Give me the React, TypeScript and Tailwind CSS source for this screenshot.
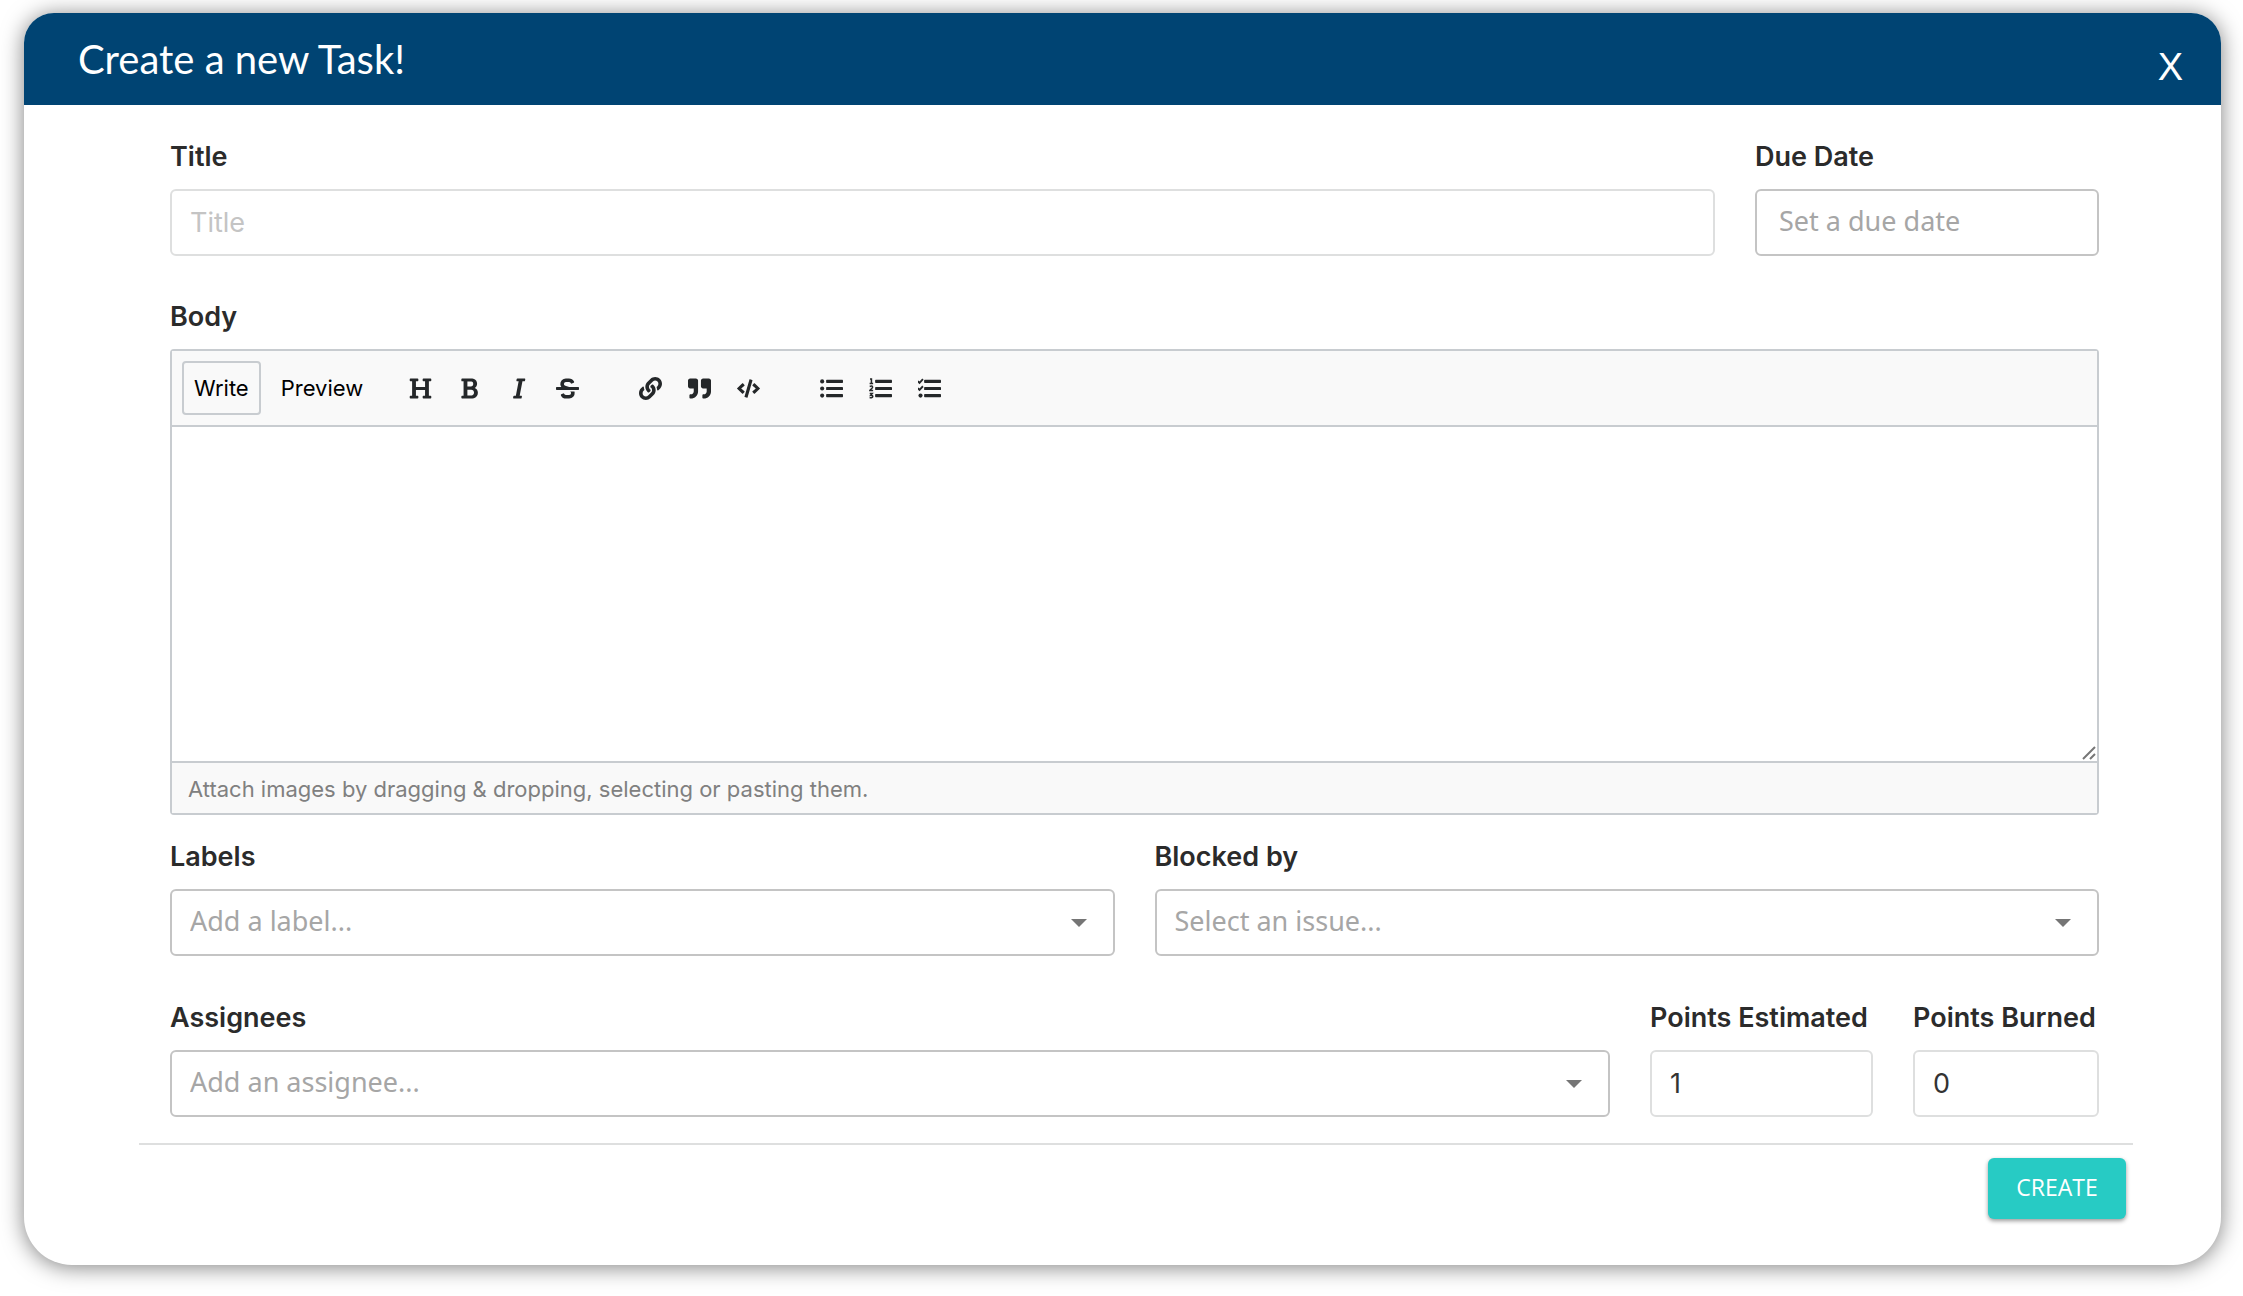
import { ReactNode, useState } from "react";
import { FaCode, FaLink, FaQuoteRight, FaStrikethrough } from "react-icons/fa";

const HeadingIcon = () => (
  <svg viewBox="0 0 512 512" className="h-[23px]" fill="currentColor">
    <path d="M496 80V48c0-8.837-7.163-16-16-16H320c-8.837 0-16 7.163-16 16v32c0 8.837 7.163 16 16 16h37.621v128H154.379V96H192c8.837 0 16-7.163 16-16V48c0-8.837-7.163-16-16-16H32c-8.837 0-16 7.163-16 16v32c0 8.837 7.163 16 16 16h37.275v320H32c-8.837 0-16 7.163-16 16v32c0 8.837 7.163 16 16 16h160c8.837 0 16-7.163 16-16v-32c0-8.837-7.163-16-16-16h-37.621V288H357.62v128H320c-8.837 0-16 7.163-16 16v32c0 8.837 7.163 16 16 16h160c8.837 0 16-7.163 16-16v-32c0-8.837-7.163-16-16-16h-37.275V96H480c8.837 0 16-7.163 16-16z" />
  </svg>
);

const BoldIcon = () => (
  <svg viewBox="0 0 384 512" className="h-[23px]" fill="currentColor">
    <path d="M304.793 243.891c33.639-18.537 53.657-54.16 53.657-95.693 0-48.236-26.25-87.626-68.626-104.179C265.138 34.01 240.849 32 209.661 32H24c-8.837 0-16 7.163-16 16v33.049c0 8.837 7.163 16 16 16h33.113v318.53H24c-8.837 0-16 7.163-16 16V464c0 8.837 7.163 16 16 16h195.69c24.203 0 44.834-1.289 66.866-7.584C337.52 457.193 376 410.647 376 350.014c0-52.168-26.573-91.684-71.207-106.123zM142.217 100.809h67.444c16.294 0 27.536 2.019 37.525 6.717 15.828 8.479 24.906 26.502 24.906 49.446 0 35.029-20.32 56.79-53.029 56.79h-76.846V100.809zm112.642 305.475c-10.14 4.056-22.677 4.907-31.409 4.907h-81.233V281.943h84.367c39.645 0 63.057 25.38 63.057 63.057.001 28.425-13.66 52.483-34.782 61.284z" />
  </svg>
);

const ItalicIcon = () => (
  <svg viewBox="0 0 320 512" className="h-[23px]" fill="currentColor">
    <path d="M204.758 416h-33.849l62.092-320h40.725a16 16 0 0 0 15.704-12.937l6.242-32C297.599 41.184 290.034 32 279.968 32H120.235a16 16 0 0 0-15.704 12.937l-6.242 32C96.362 86.816 103.927 96 113.993 96h33.846l-62.09 320H46.278a16 16 0 0 0-15.704 12.935l-6.245 32C22.402 470.815 29.967 480 40.034 480h158.479a16 16 0 0 0 15.704-12.935l6.245-32c1.927-9.88-5.638-19.065-15.704-19.065z" />
  </svg>
);

// the three list icons share their bars and only differ in the markers
const ListIcon = ({ children }: { children: ReactNode }) => (
  <svg viewBox="0 0 512 512" className="h-[23px]">
    <g fill="currentColor">
      <rect x="136" y="62" width="376" height="72" rx="16" />
      <rect x="136" y="220" width="376" height="72" rx="16" />
      <rect x="136" y="378" width="376" height="72" rx="16" />
    </g>
    {children}
  </svg>
);

const BulletListIcon = () => (
  <ListIcon>
    <g fill="currentColor">
      <circle cx="48" cy="98" r="46" />
      <circle cx="48" cy="256" r="46" />
      <circle cx="48" cy="414" r="46" />
    </g>
  </ListIcon>
);

const NumberListIcon = () => (
  <ListIcon>
    <g fill="none" stroke="currentColor" strokeWidth="34">
      <path d="M22 44h32v98M14 144h78" />
      <path d="M16 210q64-24 64 18c0 26-56 48-60 72h72" />
      <path d="M16 366h56l-32 40c62-8 62 72-26 50" />
    </g>
  </ListIcon>
);

const TaskListIcon = () => (
  <ListIcon>
    <g fill="none" stroke="currentColor" strokeWidth="42">
      <path d="M-4 92l38 38 76-82" />
      <path d="M-4 250l38 38 76-82" />
    </g>
    <circle cx="56" cy="414" r="46" fill="currentColor" />
  </ListIcon>
);

const toolGroups = [
  [
    { name: "Heading", icon: <HeadingIcon /> },
    { name: "Bold", icon: <BoldIcon /> },
    { name: "Italic", icon: <ItalicIcon /> },
    { name: "Strikethrough", icon: <FaStrikethrough /> },
  ],
  [
    { name: "Link", icon: <FaLink /> },
    { name: "Quote", icon: <FaQuoteRight /> },
    { name: "Code", icon: <FaCode /> },
  ],
  [
    { name: "Bulleted list", icon: <BulletListIcon /> },
    { name: "Numbered list", icon: <NumberListIcon /> },
    { name: "Task list", icon: <TaskListIcon /> },
  ],
];

type FieldProps = {
  id: string;
  label: string;
  className?: string;
  children: ReactNode;
};

const Field = ({ id, label, className = "", children }: FieldProps) => (
  <div className={className}>
    <label
      htmlFor={id}
      className="block mb-[14px] text-[27px] leading-9 font-semibold text-[#2b2b2b] whitespace-nowrap"
    >
      {label}
    </label>
    {children}
  </div>
);

const SelectBox = ({ id, placeholder }: { id: string; placeholder: string }) => (
  <div className="grid items-center">
    <select
      id={id}
      className="col-start-1 row-start-1 appearance-none w-full h-[67px] pl-[18px] pr-16 pb-[2px] border-2 border-[#c4c4c4] rounded-md bg-white font-['Noto_Sans'] text-[27px] text-[#a6a6a6]"
    >
      <option>{placeholder}</option>
    </select>
    <svg
      viewBox="0 0 16 8"
      className="col-start-1 row-start-1 justify-self-end w-4 h-2 mr-7 pointer-events-none"
    >
      <path d="M0 0h16L8 8z" fill="#757575" />
    </svg>
  </div>
);

const inputStyle =
  "block w-full h-[67px] px-[18px] border-2 border-[#dedfdf] rounded-md bg-white text-[27px] text-[#333] placeholder:text-[#c4c4c4]";

const App = () => {
  const [tab, setTab] = useState("Write");

  return (
    <div className="pt-[13px] pl-6 pr-[22px] pb-8 font-['Inter',sans-serif]">
      <form className="bg-white rounded-t-[30px] rounded-b-[48px] shadow-[0_2px_22px_rgba(0,0,0,0.5)]">
        <header className="flex items-center justify-between h-[92px] pl-[54px] pr-[38px] rounded-t-[30px] bg-[#004473] text-white">
          <h1 className="font-['Lato'] text-[40px] leading-[48px]">
            Create a new Task!
          </h1>
          <button
            type="button"
            aria-label="Close"
            className="pt-4 font-['Liberation_Sans'] text-[38px] leading-10"
          >
            X
          </button>
        </header>

        <div className="pl-[115px] pr-[88px] pt-6">
          <div className="pl-[31px] pr-[34px]">
            <div className="flex gap-10">
              <Field id="title" label="Title" className="flex-1 pt-[10px]">
                <input
                  id="title"
                  type="text"
                  placeholder="Title"
                  className={inputStyle}
                />
              </Field>
              <Field id="due" label="Due Date" className="w-[344px] pt-[10px]">
                <input
                  id="due"
                  type="text"
                  placeholder="Set a due date"
                  className="block w-full h-[67px] px-[22px] pb-1 border-2 border-[#c4c4c4] rounded-md bg-white font-['Noto_Sans'] text-[27px] placeholder:text-[#a6a6a6]"
                />
              </Field>
            </div>

            <Field id="body" label="Body" className="pt-[43px]">
              <div className="border-2 border-[#c8ccd0] rounded-sm text-[#242729]">
                <div className="flex items-center h-[76px] pl-[10px] bg-[#f9f9f9] border-b-2 border-[#c8ccd0]">
                  {["Write", "Preview"].map((name) => (
                    <button
                      key={name}
                      type="button"
                      onClick={() => setTab(name)}
                      className={`h-[54px] px-[10px] mr-2 border-2 rounded-sm text-[22px] text-black ${
                        tab === name ? "border-[#c8ccd0]" : "border-transparent"
                      }`}
                    >
                      {name}
                    </button>
                  ))}
                  <div className="flex gap-[34px] pl-[13px]">
                    {toolGroups.map((group) => (
                      <div key={group[0].name} className="flex">
                        {group.map((tool) => (
                          <button
                            key={tool.name}
                            type="button"
                            aria-label={tool.name}
                            className="flex items-center justify-center w-[49px] h-12 text-[23px]"
                          >
                            {tool.icon}
                          </button>
                        ))}
                      </div>
                    ))}
                  </div>
                </div>
                <div className="grid">
                  <textarea
                    id="body"
                    className="col-start-1 row-start-1 block w-full h-[334px] p-4 text-[27px] resize-none bg-white"
                  />
                  <svg
                    viewBox="0 0 14 14"
                    className="col-start-1 row-start-1 justify-self-end self-end w-[14px] h-[14px] m-px pointer-events-none"
                  >
                    <path
                      d="M1 13L13 1M8 13l5-5"
                      stroke="#777"
                      strokeWidth="2"
                    />
                  </svg>
                </div>
                <p className="h-[52px] pl-4 bg-[#f9f9f9] border-t-2 border-[#c8ccd0] text-[22px] leading-[52px] text-[#808080]">
                  Attach images by dragging &amp; dropping, selecting or pasting
                  them.
                </p>
              </div>
            </Field>

            <div className="grid grid-cols-2 gap-10 pt-6">
              <Field id="labels" label="Labels">
                <SelectBox id="labels" placeholder="Add a label..." />
              </Field>
              <Field id="blocked" label="Blocked by">
                <SelectBox id="blocked" placeholder="Select an issue..." />
              </Field>
            </div>

            <div className="flex gap-10 pt-11">
              <Field id="assignees" label="Assignees" className="flex-1">
                <SelectBox id="assignees" placeholder="Add an assignee..." />
              </Field>
              <Field
                id="estimated"
                label="Points Estimated"
                className="w-[223px]"
              >
                <input
                  id="estimated"
                  type="text"
                  defaultValue="1"
                  className={inputStyle}
                />
              </Field>
              <Field id="burned" label="Points Burned" className="w-[186px]">
                <input
                  id="burned"
                  type="text"
                  defaultValue="0"
                  className={inputStyle}
                />
              </Field>
            </div>
          </div>

          <hr className="mt-[26px] border-t-2 border-[#dedfdf]" />
          <div className="flex justify-end pt-[13px] pr-[7px] pb-[46px]">
            <button
              type="submit"
              className="w-[138px] h-[61px] pb-[2px] rounded-md bg-[#27cbc4] font-['Open_Sans'] text-[23px] text-white shadow-[0_2px_4px_rgba(0,0,0,0.4)]"
            >
              CREATE
            </button>
          </div>
        </div>
      </form>
    </div>
  );
};

export default App;
